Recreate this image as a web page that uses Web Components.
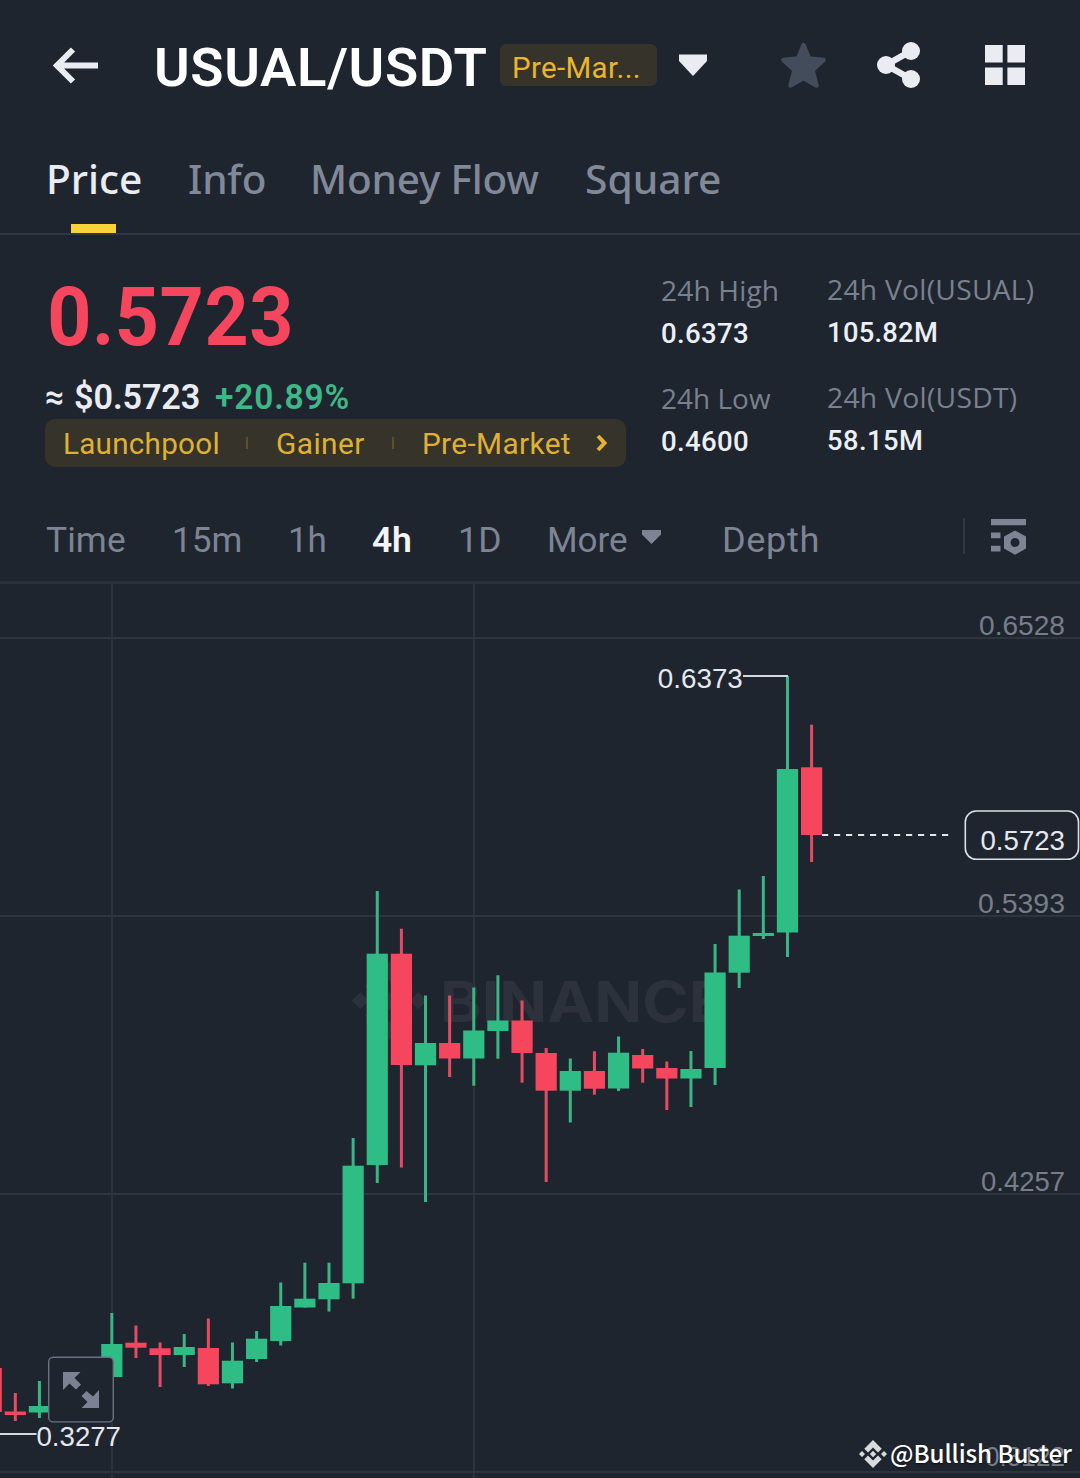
<!DOCTYPE html>
<html lang="en">
<head>
<meta charset="utf-8">
<title>USUAL/USDT</title>
<style>
    html, body { margin: 0; padding: 0; background: #1f252f; }
    body { width: 1080px; height: 1478px; overflow: hidden; font-family: Roboto, "Liberation Sans", sans-serif; }
</style>
</head>
<body>
<market-page></market-page>

<script>
const define = (name, html, setup) => {
    const template = document.createElement('template');
    template.innerHTML = html;
    customElements.define(name, class extends HTMLElement {
        connectedCallback () {
            if (this.shadowRoot) return;
            this.attachShadow({ mode: 'open' });
            this.shadowRoot.appendChild(template.content.cloneNode(true));
            setup?.call(this, this.shadowRoot);
        }
    });
};

// One line of text: "cap" is the height of its capitals, "width" the length of its ink.
// Half of the stretch goes to the glyphs, the rest to the tracking, unless "scale" fixes the glyphs.
const ctx = document.createElement('canvas').getContext('2d');
define('fit-text', `
<style>
    :host { display: block; flex: none; }
    span { display: block; width: max-content; white-space: pre; transform-origin: 0 0; }
</style>
<span><slot></slot></span>`, function (root) {
    const span = root.querySelector('span');
    const text = this.textContent;
    const cap = +this.getAttribute('cap');
    const width = +this.getAttribute('width');
    const css = getComputedStyle(this);
    ctx.font = `${css.fontWeight} 100px ${css.fontFamily}`;
    const size = cap / ctx.measureText('H').actualBoundingBoxAscent * 100;
    ctx.font = `${css.fontWeight} ${size}px ${css.fontFamily}`;
    const m = ctx.measureText(text);
    const ink = m.actualBoundingBoxLeft + m.actualBoundingBoxRight;
    const single = text.length < 2;
    const scale = +this.getAttribute('scale') || (single ? width / ink : Math.sqrt(width / ink));
    const track = single ? 0 : (width / scale - ink) / (text.length - 1);
    const dy = cap / 2 - (m.fontBoundingBoxAscent - m.fontBoundingBoxDescent) / 2;
    this.style.cssText += `width:${width}px;height:${cap}px`;
    span.style.cssText = `font-size:${size}px;line-height:${cap}px;letter-spacing:${track}px;` +
        `transform:translate(${m.actualBoundingBoxLeft * scale}px,${dy}px) scaleX(${scale})`;
});

define('pair-header', `
<style>
    :host { display: flex; height: 130px; padding: 0 55px 0 53px; box-sizing: border-box; align-items: center; color: #fff; }
    svg { display: block; flex: none; }
    .back { margin-right: 59px; }
    h1 { margin: 4px 14px 0 0; font-weight: 600; font-size: 16px; }
    .badge { width: 157px; height: 42px; border-radius: 6px; background: #36332a; color: #e9b62c;
        display: flex; align-items: center; box-sizing: border-box; padding: 7px 0 0 13.5px; }
    .caret { margin-left: 22px; }
    .star { margin-left: 73.5px; }
    .share { margin-left: 51.5px; }
    .grid { margin-left: auto; }
</style>
<svg class="back" width="45" height="37" viewBox="0 0 45 37"><path d="M45 18.5H4M20 2.5 4 18.5 20 34.5" fill="none" stroke="#eaecf2" stroke-width="6"/></svg>
<h1><fit-text cap="38" width="329">USUAL/USDT</fit-text></h1>
<div class="badge"><fit-text cap="20.7" width="125">Pre-Mar...</fit-text></div>
<svg class="caret" width="28" height="22" viewBox="0 0 28 22"><path d="M0 .5H28V7L14 22 0 7Z" fill="#eaecf2"/></svg>
<svg class="star" width="45" height="46" viewBox="0 0 45 46"><path d="M22.5 3 28 16.5 42.5 18 31.5 28 35.5 43.5 22.5 36 9.5 43.5 13.5 28 2.5 18 17 16.5Z" fill="#434c5a" stroke="#434c5a" stroke-width="4.5" stroke-linejoin="round"/></svg>
<svg class="share" width="43" height="46" viewBox="0 0 43 46"><path d="M34 9 9 23 34 37" fill="none" stroke="#eaecf2" stroke-width="6.5"/><g fill="#eaecf2"><circle cx="34" cy="9" r="9"/><circle cx="9" cy="23" r="9"/><circle cx="34" cy="37" r="9"/></g></svg>
<svg class="grid" width="40" height="40" viewBox="0 0 40 40"><path d="M0 0H17.7V17.5H0ZM22.4 0H40V17.5H22.4ZM0 22.4H17.7V40H0ZM22.4 22.4H40V40H22.4Z" fill="#eaecf2"/></svg>`);

define('page-tabs', `
<style>
    :host { display: flex; height: 105px; padding: 35px 0 0 49px; box-sizing: border-box; border-bottom: 2px solid #303640;
        color: #818898; font-family: "Noto Sans", sans-serif; font-weight: 500; }
    .tab { display: flex; flex-direction: column; align-items: center; margin-right: 48px; }
    .active { color: #eaecf2; }
    .active::after { content: ""; width: 45px; height: 9px; margin: auto 3px 0 0; background: #f8d33a; }
</style>
<div class="tab active"><fit-text cap="29.3" width="92">Price</fit-text></div>
<div class="tab"><fit-text cap="29.3" width="75.5">Info</fit-text></div>
<div class="tab"><fit-text cap="29.3" width="226">Money Flow</fit-text></div>
<div class="tab"><fit-text cap="29.3" width="133">Square</fit-text></div>`);

define('stat-item', `
<style>
    :host { display: flex; flex-direction: column; gap: 21.3px; color: #eceff4; }
    .label { color: #7a818e; font-family: "Open Sans", sans-serif; }
    .value { font-weight: 500; }
</style>
<div class="label"><slot name="label"></slot></div>
<div class="value"><slot></slot></div>`);

define('price-summary', `
<style>
    :host { display: flex; height: 260px; box-sizing: border-box; padding: 45px 0 0 45px; }
    .main { width: 616.8px; display: flex; flex-direction: column; }
    .price { margin: 6px 0 0 4.5px; color: #f6465d; font-weight: 700; }
    .sub { display: flex; margin: 39px 0 0 1px; align-items: center; color: #eaecf2; font-weight: 600; }
    .usd { margin: 0 17.5px 0 11.5px; }
    .change { color: #3db887; }
    .tags { width: 581px; height: 48px; margin-top: 9.5px; border-radius: 10px; background: #36332a; color: #dfb034;
        display: flex; align-items: center; box-sizing: border-box; padding: 0 19px 0 20px; }
    .tags fit-text { margin-top: 1.5px; }
    i { width: 2px; height: 12px; background: #5e4f29; }
    .stats { display: grid; grid-template-columns: 166px auto; grid-auto-rows: 108px; align-items: start; }
    .left { padding-top: 1px; }
</style>
<div class="main">
    <div class="price"><fit-text cap="59" width="240.5" scale=".94">0.5723</fit-text></div>
    <div class="sub">
        <fit-text cap="25" width="17">≈</fit-text>
        <fit-text class="usd" cap="25.3" width="124" scale=".96">$0.5723</fit-text>
        <fit-text class="change" cap="25.3" width="132" scale=".94">+20.89%</fit-text>
    </div>
    <div class="tags">
        <fit-text cap="21" width="152.5">Launchpool</fit-text>
        <i style="margin: 0 28.5px"></i>
        <fit-text cap="21" width="87.5">Gainer</fit-text>
        <i style="margin: 0 29.5px 0 28px"></i>
        <fit-text cap="21" width="146">Pre-Market</fit-text>
        <svg style="margin-left:auto" width="11" height="18" viewBox="0 0 11 18"><path d="M2 2 8.5 9 2 16" fill="none" stroke="#e5b232" stroke-width="4"/></svg>
    </div>
</div>
<div class="stats">
    <stat-item class="left"><fit-text slot="label" cap="20.3" width="115">24h High</fit-text><fit-text cap="20.5" width="85.5" scale=".97">0.6373</fit-text></stat-item>
    <stat-item><fit-text slot="label" cap="20.3" width="206">24h Vol(USUAL)</fit-text><fit-text cap="20.5" width="107" scale=".96" style="margin-left:1px">105.82M</fit-text></stat-item>
    <stat-item class="left"><fit-text slot="label" cap="20.3" width="109">24h Low</fit-text><fit-text cap="20.5" width="85.5" scale=".97">0.4600</fit-text></stat-item>
    <stat-item><fit-text slot="label" cap="20.3" width="189">24h Vol(USDT)</fit-text><fit-text cap="20.5" width="93" scale=".96">58.15M</fit-text></stat-item>
</div>`);

define('interval-bar', `
<style>
    :host { display: flex; height: 89px; box-sizing: border-box; padding: 0 54px 4px 46px; align-items: center; color: #7d8493; border-bottom: 3px solid #2a303a; }
    fit-text { margin-top: 8px; }
    .on { margin-top: 7px; color: #f3f4f7; font-weight: 600; }
    svg { margin-top: 1px; }
    i { width: 2px; height: 36px; margin-left: auto; margin-right: 26px; background: #303742; }
</style>
<fit-text cap="25.3" width="79">Time</fit-text>
<fit-text cap="25.3" width="66.5" style="margin-left:49px">15m</fit-text>
<fit-text cap="25.3" width="35.5" style="margin-left:49px">1h</fit-text>
<fit-text class="on" cap="25.3" width="38" style="margin-left:47px">4h</fit-text>
<fit-text cap="25.3" width="39.5" style="margin-left:49.5px">1D</fit-text>
<fit-text cap="25.3" width="78" style="margin-left:50px">More</fit-text>
<svg style="margin-left:15px" width="20" height="14" viewBox="0 0 20 14"><path d="M0 0H19V4.5L9.5 14 0 4.5Z" fill="#7d8493"/></svg>
<fit-text cap="25.3" width="94" style="margin-left:61.5px">Depth</fit-text>
<i></i>
<svg width="35" height="36" viewBox="0 0 35 36"><path d="M0 0H35V6.3H0ZM0 13.5H9.5V19.3H0ZM0 26.7H9.5V32.5H0Z" fill="#7d8493"/><path fill-rule="evenodd" fill="#7d8493" d="M24 11.5 35 17.5V29.5L24 35.7 13 29.5V17.5ZM24 19A4.5 4.5 0 1 0 24 28A4.5 4.5 0 1 0 24 19Z"/></svg>`);

// [up, high, body top, body bottom, low], oldest first, in chart pixels; null for the two bars behind the expand button
const candles = [
    [0, 1368, 1368, 1412, 1412], [0, 1393, 1411.5, 1415, 1421], [1, 1381, 1406, 1412.5, 1418], null, null,
    [1, 1313, 1344, 1377, 1377], [0, 1325.5, 1342.7, 1347.7, 1358], [0, 1342.5, 1348.3, 1355, 1387],
    [1, 1334, 1347, 1355, 1367], [0, 1318.5, 1348, 1384.3, 1386], [1, 1342.5, 1360.7, 1383.3, 1388.5],
    [1, 1331, 1338.7, 1359, 1362], [1, 1282.5, 1306, 1341, 1345.5], [1, 1262.7, 1298.7, 1307.5, 1307.5],
    [1, 1262.7, 1283, 1299.3, 1311.5], [1, 1138, 1165.7, 1283.3, 1298.7], [1, 891, 953.7, 1165, 1183],
    [0, 928.7, 953.7, 1065, 1167.5], [1, 995.5, 1043, 1065.3, 1202], [0, 995.5, 1043, 1058.5, 1077],
    [1, 987.5, 1030.5, 1058.5, 1085.7], [1, 975.3, 1020.5, 1031, 1058.7], [0, 1000.5, 1020.5, 1053, 1082.7],
    [0, 1048, 1053, 1090.7, 1182], [1, 1058.5, 1071, 1090.7, 1122.5], [0, 1051.3, 1071, 1088.7, 1094.7],
    [1, 1036.5, 1052.7, 1088.5, 1091], [0, 1049, 1055, 1068.5, 1082.7], [0, 1061.5, 1068, 1078.5, 1110],
    [1, 1051, 1069, 1078.5, 1107], [1, 944, 972.5, 1068, 1085], [1, 889.5, 935.7, 972.7, 988],
    [1, 876, 933, 936, 939], [1, 676, 769, 932.5, 957], [0, 724.7, 767.3, 835, 862]
];

define('candle-chart', `
<style>
    :host { display: block; height: 894px; }
    svg { display: block; }
    text { font-family: "Liberation Sans", sans-serif; font-size: 27.5px; fill: #e6e8ed; }
    .axis text { fill: #777e8a; }
    .brand text { font-family: Inter, sans-serif; font-weight: 700; font-size: 57px; fill: #2c313c; }
</style>
<svg width="1080" height="894" viewBox="0 584 1080 894">
    <g stroke="#2f353f" stroke-width="1.8"><path d="M112 584V1478M474 584V1478M0 638H1080M0 916H1080M0 1194H1080M0 1472H1080"/></g>
    <g class="brand">
        <g fill="#2c313c" transform="translate(389 1001) scale(2.66)"><path d="M-5.8-2.2 0-8 5.8-2.2 9.1-5.5 0-14.6-9.1-5.5ZM-5.8 2.2 0 8 5.8 2.2 9.1 5.5 0 14.6-9.1 5.5ZM-14-0.1-10.8-3.3-7.6-.1-10.8 3.1ZM7.8-.1 11-3.3 14.2-.1 11 3.1ZM0-3.3 3.3 0 0 3.3-3.3 0Z"/></g>
        <text x="440" y="1021.5" textLength="287" lengthAdjust="spacingAndGlyphs">BINANCE</text>
    </g>
    <g class="axis">
        <text x="979" y="635" textLength="86" lengthAdjust="spacingAndGlyphs">0.6528</text>
        <text x="978" y="913" textLength="87" lengthAdjust="spacingAndGlyphs">0.5393</text>
        <text x="981" y="1191" textLength="84" lengthAdjust="spacingAndGlyphs">0.4257</text>
        <text x="985" y="1466" textLength="80" lengthAdjust="spacingAndGlyphs">0.3122</text>
    </g>
    <g id="candles"></g>
    <path d="M743 676H788M0 1434H36.5" stroke="#d5d8de" stroke-width="1.8"/>
    <text x="657.8" y="688" textLength="85" lengthAdjust="spacingAndGlyphs">0.6373</text>
    <text x="36.5" y="1446" textLength="84.5" lengthAdjust="spacingAndGlyphs">0.3277</text>
    <path d="M822 835H949" stroke="#e2e4e9" stroke-width="1.8" stroke-dasharray="6.2 5.8"/>
    <rect x="965.3" y="811" width="113.2" height="48.3" rx="11" fill="#1f252f" stroke="#dcdfe5" stroke-width="1.6"/>
    <text x="980.5" y="850" textLength="84.5" lengthAdjust="spacingAndGlyphs">0.5723</text>
    <rect x="48.7" y="1357.3" width="64.6" height="64.6" rx="4.5" fill="#1f252f" stroke="#6b7281" stroke-width="1.4"/>
    <path fill="#7b8293" d="M63 1372H80.5L74.5 1378 81 1384.5 76 1389.5 69.5 1383.5 63 1390ZM99 1408H81.5L87.5 1402 81.5 1396 86.5 1391 93 1396.5 99 1390Z"/>
</svg>`, function (root) {
    const group = root.getElementById('candles');
    const step = 24.13;
    const first = 811.6 - step * (candles.length - 1);
    let html = '';
    candles.forEach((c, i) => {
        if (!c) return;
        const [up, high, top, bottom, low] = c;
        const x = first + i * step;
        const body = up ? '#2ebd85' : '#f6465d';
        const wick = up ? '#3bb585' : '#e54c63';
        html += `<rect x="${x - 1.5}" y="${high}" width="3" height="${low - high}" fill="${wick}"/>` +
            `<rect x="${x - 10.6}" y="${top}" width="21.2" height="${bottom - top}" fill="${body}"/>`;
    });
    group.innerHTML = html;
});

define('author-mark', `
<style>
    :host { position: absolute; right: 8px; bottom: 10px; display: flex; align-items: center; gap: 4.5px; color: #fff;
        font-family: "Noto Sans CJK SC", sans-serif; font-weight: 500; text-shadow: 0 1px 2px rgba(0, 0, 0, .6); }
    svg { display: block; }
</style>
<svg width="28" height="28" viewBox="-14 -14 28 28"><path fill="#d9dadc" d="M-5-1.6 0-6.6 5-1.6 8.7-5.3 0-14-8.7-5.3ZM-5 1.6 0 6.6 5 1.6 8.7 5.3 0 14-8.7 5.3ZM-14 0-11-3-8 0-11 3ZM8 0 11-3 14 0 11 3ZM0-3.2 3.2 0 0 3.2-3.2 0Z"/></svg>
<fit-text cap="18" width="181">@Bullish Buster</fit-text>`);

define('market-page', `
<style>
    :host { display: flex; flex-direction: column; position: relative; width: 1080px; height: 1478px; overflow: hidden; background: #1f252f; }
    :host > * { flex: none; }
</style>
<pair-header></pair-header>
<page-tabs></page-tabs>
<price-summary></price-summary>
<interval-bar></interval-bar>
<candle-chart></candle-chart>
<author-mark></author-mark>`);
</script>
</body>
</html>
